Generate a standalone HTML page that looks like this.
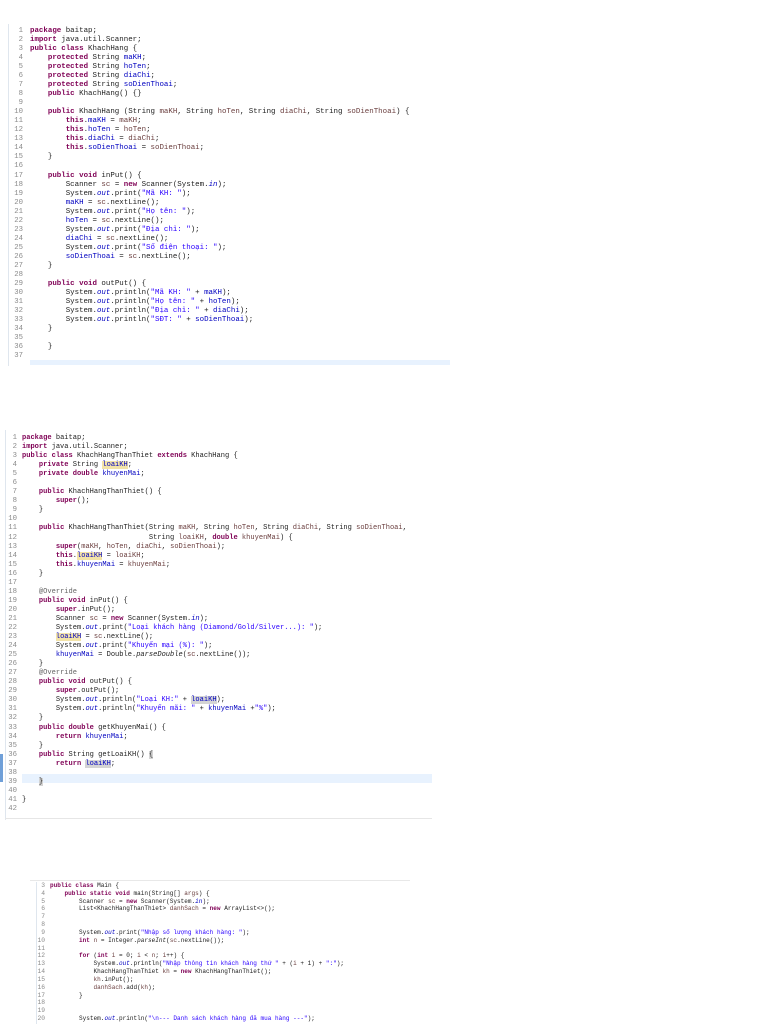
<!DOCTYPE html>
<html><head><meta charset="utf-8">
<style>
body{margin:0;width:768px;height:1024px;background:#fff;overflow:hidden;position:relative;font-family:"Liberation Mono","DejaVu Sans Mono",monospace;}
.blk{position:absolute;white-space:pre;color:#222;}
.ln{position:absolute;white-space:pre;color:#8a8a8a;text-align:right;}
.k{color:#7f0055;font-weight:bold}
.f{color:#0000c0}
.s{color:#2a00ff}
.p{color:#6a3e3e}
.a{color:#646464}
.i{font-style:italic}
.h{background:#d4d4d4}
.hy{background:#f3e3a8}
</style></head><body>

<!-- Block 1 -->
<div style="position:absolute;left:8px;top:24px;width:1px;height:342px;background:#dfe6ee"></div>
<div style="position:absolute;left:30px;top:360px;width:420px;height:5px;background:#e8f2fe"></div>
<div class="ln" style="left:0;top:27px;width:23px;font-size:7.3px;line-height:9.03px">1
2
3
4
5
6
7
8
9
10
11
12
13
14
15
16
17
18
19
20
21
22
23
24
25
26
27
28
29
30
31
32
33
34
35
36
37</div>
<div class="blk" style="left:30px;top:27px;font-size:7.45px;line-height:9.03px"><span class="k">package</span> baitap;
<span class="k">import</span> java.util.Scanner;
<span class="k">public class</span> KhachHang {
    <span class="k">protected</span> String <span class="f">maKH</span>;
    <span class="k">protected</span> String <span class="f">hoTen</span>;
    <span class="k">protected</span> String <span class="f">diaChi</span>;
    <span class="k">protected</span> String <span class="f">soDienThoai</span>;
    <span class="k">public</span> KhachHang() {}

    <span class="k">public</span> KhachHang (String <span class="p">maKH</span>, String <span class="p">hoTen</span>, String <span class="p">diaChi</span>, String <span class="p">soDienThoai</span>) {
        <span class="k">this</span>.<span class="f">maKH</span> = <span class="p">maKH</span>;
        <span class="k">this</span>.<span class="f">hoTen</span> = <span class="p">hoTen</span>;
        <span class="k">this</span>.<span class="f">diaChi</span> = <span class="p">diaChi</span>;
        <span class="k">this</span>.<span class="f">soDienThoai</span> = <span class="p">soDienThoai</span>;
    }

    <span class="k">public void</span> inPut() {
        Scanner <span class="p">sc</span> = <span class="k">new</span> Scanner(System.<span class="f i">in</span>);
        System.<span class="f i">out</span>.print(<span class="s">"Mã KH: "</span>);
        <span class="f">maKH</span> = <span class="p">sc</span>.nextLine();
        System.<span class="f i">out</span>.print(<span class="s">"Họ tên: "</span>);
        <span class="f">hoTen</span> = <span class="p">sc</span>.nextLine();
        System.<span class="f i">out</span>.print(<span class="s">"Địa chỉ: "</span>);
        <span class="f">diaChi</span> = <span class="p">sc</span>.nextLine();
        System.<span class="f i">out</span>.print(<span class="s">"Số điện thoại: "</span>);
        <span class="f">soDienThoai</span> = <span class="p">sc</span>.nextLine();
    }

    <span class="k">public void</span> outPut() {
        System.<span class="f i">out</span>.println(<span class="s">"Mã KH: "</span> + <span class="f">maKH</span>);
        System.<span class="f i">out</span>.println(<span class="s">"Họ tên: "</span> + <span class="f">hoTen</span>);
        System.<span class="f i">out</span>.println(<span class="s">"Địa chỉ: "</span> + <span class="f">diaChi</span>);
        System.<span class="f i">out</span>.println(<span class="s">"SĐT: "</span> + <span class="f">soDienThoai</span>);
    }

    }
</div>

<!-- Block 2 -->
<div style="position:absolute;left:5px;top:430px;width:1px;height:390px;background:#dfe6ee"></div>
<div style="position:absolute;left:22px;top:774px;width:410px;height:9px;background:#e8f2fe"></div>
<div style="position:absolute;left:5px;top:818px;width:427px;height:1px;background:#e6e6e6"></div>
<div style="position:absolute;left:0;top:754px;width:3px;height:28px;background:#6f9fd8"></div>
<div class="ln" style="left:0;top:434px;width:17px;font-size:7.3px;line-height:9.05px">1
2
3
4
5
6
7
8
9
10
11
12
13
14
15
16
17
18
19
20
21
22
23
24
25
26
27
28
29
30
31
32
33
34
35
36
37
38
39
40
41
42</div>
<div class="blk" style="left:22px;top:434px;font-size:7.05px;line-height:9.05px"><span class="k">package</span> baitap;
<span class="k">import</span> java.util.Scanner;
<span class="k">public class</span> KhachHangThanThiet <span class="k">extends</span> KhachHang {
    <span class="k">private</span> String <span class="f hy">loaiKH</span>;
    <span class="k">private double</span> <span class="f">khuyenMai</span>;

    <span class="k">public</span> KhachHangThanThiet() {
        <span class="k">super</span>();
    }

    <span class="k">public</span> KhachHangThanThiet(String <span class="p">maKH</span>, String <span class="p">hoTen</span>, String <span class="p">diaChi</span>, String <span class="p">soDienThoai</span>,
                              String <span class="p">loaiKH</span>, <span class="k">double</span> <span class="p">khuyenMai</span>) {
        <span class="k">super</span>(<span class="p">maKH</span>, <span class="p">hoTen</span>, <span class="p">diaChi</span>, <span class="p">soDienThoai</span>);
        <span class="k">this</span>.<span class="f hy">loaiKH</span> = <span class="p">loaiKH</span>;
        <span class="k">this</span>.<span class="f">khuyenMai</span> = <span class="p">khuyenMai</span>;
    }

    <span class="a">@Override</span>
    <span class="k">public void</span> inPut() {
        <span class="k">super</span>.inPut();
        Scanner <span class="p">sc</span> = <span class="k">new</span> Scanner(System.<span class="f i">in</span>);
        System.<span class="f i">out</span>.print(<span class="s">"Loại khách hàng (Diamond/Gold/Silver...): "</span>);
        <span class="f hy">loaiKH</span> = <span class="p">sc</span>.nextLine();
        System.<span class="f i">out</span>.print(<span class="s">"Khuyến mại (%): "</span>);
        <span class="f">khuyenMai</span> = Double.<span class="i">parseDouble</span>(<span class="p">sc</span>.nextLine());
    }
    <span class="a">@Override</span>
    <span class="k">public void</span> outPut() {
        <span class="k">super</span>.outPut();
        System.<span class="f i">out</span>.println(<span class="s">"Loại KH:"</span> + <span class="f h">loaiKH</span>);
        System.<span class="f i">out</span>.println(<span class="s">"Khuyến mãi: "</span> + <span class="f">khuyenMai</span> +<span class="s">"%"</span>);
    }
    <span class="k">public double</span> getKhuyenMai() {
        <span class="k">return</span> <span class="f">khuyenMai</span>;
    }
    <span class="k">public</span> String getLoaiKH() <span class="h">{</span>
        <span class="k">return</span> <span class="f h">loaiKH</span>;

    <span class="h">}</span>

}
</div>

<!-- Block 3 -->
<div style="position:absolute;left:30px;top:880px;width:380px;height:1px;background:#e8e8e8"></div>
<div style="position:absolute;left:36px;top:882px;width:1px;height:142px;background:#dfe6ee"></div>
<div class="ln" style="left:30px;top:882px;width:15px;font-size:6.3px;line-height:7.83px">3
4
5
6
7
8
9
10
11
12
13
14
15
16
17
18
19
20</div>
<div class="blk" style="left:50px;top:882px;font-size:6.05px;line-height:7.83px"><span class="k">public class</span> Main {
    <span class="k">public static void</span> main(String[] <span class="p">args</span>) {
        Scanner <span class="p">sc</span> = <span class="k">new</span> Scanner(System.<span class="f i">in</span>);
        List&lt;KhachHangThanThiet&gt; <span class="p">danhSach</span> = <span class="k">new</span> ArrayList&lt;&gt;();


        System.<span class="f i">out</span>.print(<span class="s">"Nhập số lượng khách hàng: "</span>);
        <span class="k">int</span> <span class="p">n</span> = Integer.<span class="i">parseInt</span>(<span class="p">sc</span>.nextLine());

        <span class="k">for</span> (<span class="k">int</span> <span class="p">i</span> = 0; <span class="p">i</span> &lt; <span class="p">n</span>; <span class="p">i</span>++) {
            System.<span class="f i">out</span>.println(<span class="s">"Nhập thông tin khách hàng thứ "</span> + (<span class="p">i</span> + 1) + <span class="s">":"</span>);
            KhachHangThanThiet <span class="p">kh</span> = <span class="k">new</span> KhachHangThanThiet();
            <span class="p">kh</span>.inPut();
            <span class="p">danhSach</span>.add(<span class="p">kh</span>);
        }


        System.<span class="f i">out</span>.println(<span class="s">"\n--- Danh sách khách hàng đã mua hàng ---"</span>);
</div>
</body></html>
